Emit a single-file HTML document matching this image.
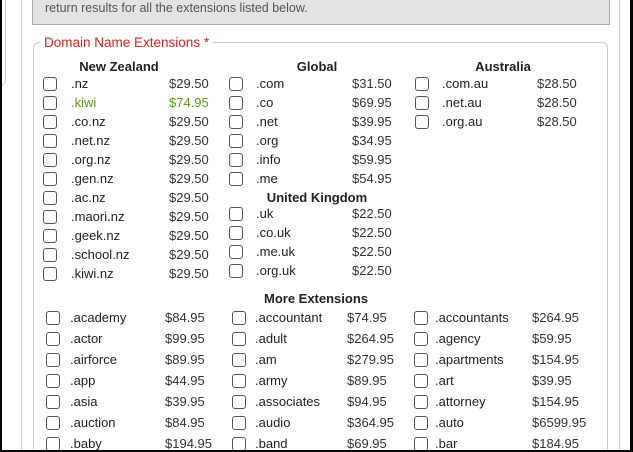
<!DOCTYPE html>
<html style="width:633px;height:452px;overflow:hidden"><head><meta charset="utf-8"><style>
*{margin:0;padding:0;box-sizing:border-box}
html,body{width:633px;height:452px;overflow:hidden}
body{background:#fff;font-family:"Liberation Sans",Arial,sans-serif;font-size:13px;color:#222;position:relative}
.a{position:absolute;white-space:nowrap;line-height:16px}
.c{position:absolute;width:14px;height:14px;border:1px solid #555;border-radius:3px;background:#fff}
.h{position:absolute;font-weight:bold;font-size:13px;line-height:16px;white-space:nowrap;transform:translateX(-50%);color:#222}
.p{color:#333}
.g{color:#5a9a1a}
</style></head><body>
<div style="position:absolute;left:-10px;top:-10px;width:16px;height:96px;border:1px solid #ccc;border-radius:0 0 6px 0"></div>
<div style="position:absolute;left:21px;top:0;width:1px;height:452px;background:#ccc"></div>
<div style="position:absolute;left:619px;top:0;width:1px;height:452px;background:#ccc"></div>
<div style="position:absolute;left:32px;top:-2px;width:578px;height:27px;background:#e3e3e3;border:1px solid #aaa;border-top:none"></div>
<div class="a" style="left:45px;top:0px;color:#555;font-size:12.5px">return results for all the extensions listed below.</div>
<div style="position:absolute;left:33px;top:42px;width:575px;height:416px;border:1px solid #ccc;border-radius:6px"></div>
<div class="a" style="left:40px;top:35px;background:#fff;padding:0 4px;color:#e0201c;font-size:13.5px">Domain Name Extensions *</div>

<div class="h" style="left:119px;top:59px">New Zealand</div>
<div class="h" style="left:317px;top:59px">Global</div>
<div class="h" style="left:503px;top:59px">Australia</div>
<div class="h" style="left:317px;top:190px">United Kingdom</div>
<div class="h" style="left:316px;top:291px">More Extensions</div>

<div class="c" style="left:43px;top:77px"></div><div class="a" style="left:71px;top:76px">.nz</div><div class="a p" style="left:169px;top:76px">$29.50</div>
<div class="c" style="left:43px;top:96px"></div><div class="a g" style="left:71px;top:95px">.kiwi</div><div class="a g" style="left:169px;top:95px">$74.95</div>
<div class="c" style="left:43px;top:115px"></div><div class="a" style="left:71px;top:114px">.co.nz</div><div class="a p" style="left:169px;top:114px">$29.50</div>
<div class="c" style="left:43px;top:134px"></div><div class="a" style="left:71px;top:133px">.net.nz</div><div class="a p" style="left:169px;top:133px">$29.50</div>
<div class="c" style="left:43px;top:153px"></div><div class="a" style="left:71px;top:152px">.org.nz</div><div class="a p" style="left:169px;top:152px">$29.50</div>
<div class="c" style="left:43px;top:172px"></div><div class="a" style="left:71px;top:171px">.gen.nz</div><div class="a p" style="left:169px;top:171px">$29.50</div>
<div class="c" style="left:43px;top:191px"></div><div class="a" style="left:71px;top:190px">.ac.nz</div><div class="a p" style="left:169px;top:190px">$29.50</div>
<div class="c" style="left:43px;top:210px"></div><div class="a" style="left:71px;top:209px">.maori.nz</div><div class="a p" style="left:169px;top:209px">$29.50</div>
<div class="c" style="left:43px;top:229px"></div><div class="a" style="left:71px;top:228px">.geek.nz</div><div class="a p" style="left:169px;top:228px">$29.50</div>
<div class="c" style="left:43px;top:248px"></div><div class="a" style="left:71px;top:247px">.school.nz</div><div class="a p" style="left:169px;top:247px">$29.50</div>
<div class="c" style="left:43px;top:267px"></div><div class="a" style="left:71px;top:266px">.kiwi.nz</div><div class="a p" style="left:169px;top:266px">$29.50</div>

<div class="c" style="left:229px;top:77px"></div><div class="a" style="left:256px;top:76px">.com</div><div class="a p" style="left:352px;top:76px">$31.50</div>
<div class="c" style="left:229px;top:96px"></div><div class="a" style="left:256px;top:95px">.co</div><div class="a p" style="left:352px;top:95px">$69.95</div>
<div class="c" style="left:229px;top:115px"></div><div class="a" style="left:256px;top:114px">.net</div><div class="a p" style="left:352px;top:114px">$39.95</div>
<div class="c" style="left:229px;top:134px"></div><div class="a" style="left:256px;top:133px">.org</div><div class="a p" style="left:352px;top:133px">$34.95</div>
<div class="c" style="left:229px;top:153px"></div><div class="a" style="left:256px;top:152px">.info</div><div class="a p" style="left:352px;top:152px">$59.95</div>
<div class="c" style="left:229px;top:172px"></div><div class="a" style="left:256px;top:171px">.me</div><div class="a p" style="left:352px;top:171px">$54.95</div>

<div class="c" style="left:229px;top:207px"></div><div class="a" style="left:256px;top:206px">.uk</div><div class="a p" style="left:352px;top:206px">$22.50</div>
<div class="c" style="left:229px;top:226px"></div><div class="a" style="left:256px;top:225px">.co.uk</div><div class="a p" style="left:352px;top:225px">$22.50</div>
<div class="c" style="left:229px;top:245px"></div><div class="a" style="left:256px;top:244px">.me.uk</div><div class="a p" style="left:352px;top:244px">$22.50</div>
<div class="c" style="left:229px;top:264px"></div><div class="a" style="left:256px;top:263px">.org.uk</div><div class="a p" style="left:352px;top:263px">$22.50</div>

<div class="c" style="left:415px;top:77px"></div><div class="a" style="left:442px;top:76px">.com.au</div><div class="a p" style="left:537px;top:76px">$28.50</div>
<div class="c" style="left:415px;top:96px"></div><div class="a" style="left:442px;top:95px">.net.au</div><div class="a p" style="left:537px;top:95px">$28.50</div>
<div class="c" style="left:415px;top:115px"></div><div class="a" style="left:442px;top:114px">.org.au</div><div class="a p" style="left:537px;top:114px">$28.50</div>

<div class="c" style="left:46px;top:311px"></div><div class="a" style="left:70px;top:310px">.academy</div><div class="a p" style="left:165px;top:310px">$84.95</div>
<div class="c" style="left:46px;top:332px"></div><div class="a" style="left:70px;top:331px">.actor</div><div class="a p" style="left:165px;top:331px">$99.95</div>
<div class="c" style="left:46px;top:353px"></div><div class="a" style="left:70px;top:352px">.airforce</div><div class="a p" style="left:165px;top:352px">$89.95</div>
<div class="c" style="left:46px;top:374px"></div><div class="a" style="left:70px;top:373px">.app</div><div class="a p" style="left:165px;top:373px">$44.95</div>
<div class="c" style="left:46px;top:395px"></div><div class="a" style="left:70px;top:394px">.asia</div><div class="a p" style="left:165px;top:394px">$39.95</div>
<div class="c" style="left:46px;top:416px"></div><div class="a" style="left:70px;top:415px">.auction</div><div class="a p" style="left:165px;top:415px">$84.95</div>
<div class="c" style="left:46px;top:437px"></div><div class="a" style="left:70px;top:436px">.baby</div><div class="a p" style="left:165px;top:436px">$194.95</div>

<div class="c" style="left:232px;top:311px"></div><div class="a" style="left:255px;top:310px">.accountant</div><div class="a p" style="left:347px;top:310px">$74.95</div>
<div class="c" style="left:232px;top:332px"></div><div class="a" style="left:255px;top:331px">.adult</div><div class="a p" style="left:347px;top:331px">$264.95</div>
<div class="c" style="left:232px;top:353px"></div><div class="a" style="left:255px;top:352px">.am</div><div class="a p" style="left:347px;top:352px">$279.95</div>
<div class="c" style="left:232px;top:374px"></div><div class="a" style="left:255px;top:373px">.army</div><div class="a p" style="left:347px;top:373px">$89.95</div>
<div class="c" style="left:232px;top:395px"></div><div class="a" style="left:255px;top:394px">.associates</div><div class="a p" style="left:347px;top:394px">$94.95</div>
<div class="c" style="left:232px;top:416px"></div><div class="a" style="left:255px;top:415px">.audio</div><div class="a p" style="left:347px;top:415px">$364.95</div>
<div class="c" style="left:232px;top:437px"></div><div class="a" style="left:255px;top:436px">.band</div><div class="a p" style="left:347px;top:436px">$69.95</div>

<div class="c" style="left:414px;top:311px"></div><div class="a" style="left:435px;top:310px">.accountants</div><div class="a p" style="left:532px;top:310px">$264.95</div>
<div class="c" style="left:414px;top:332px"></div><div class="a" style="left:435px;top:331px">.agency</div><div class="a p" style="left:532px;top:331px">$59.95</div>
<div class="c" style="left:414px;top:353px"></div><div class="a" style="left:435px;top:352px">.apartments</div><div class="a p" style="left:532px;top:352px">$154.95</div>
<div class="c" style="left:414px;top:374px"></div><div class="a" style="left:435px;top:373px">.art</div><div class="a p" style="left:532px;top:373px">$39.95</div>
<div class="c" style="left:414px;top:395px"></div><div class="a" style="left:435px;top:394px">.attorney</div><div class="a p" style="left:532px;top:394px">$154.95</div>
<div class="c" style="left:414px;top:416px"></div><div class="a" style="left:435px;top:415px">.auto</div><div class="a p" style="left:532px;top:415px">$6599.95</div>
<div class="c" style="left:414px;top:437px"></div><div class="a" style="left:435px;top:436px">.bar</div><div class="a p" style="left:532px;top:436px">$184.95</div>

<div style="position:absolute;left:0;top:0;width:2px;height:452px;background:#000;z-index:5"></div>
<div style="position:absolute;left:630px;top:0;width:3px;height:452px;background:#000;z-index:5"></div>
<div style="position:absolute;left:0;top:450px;width:633px;height:2px;background:#000;z-index:5"></div>
</body></html>
